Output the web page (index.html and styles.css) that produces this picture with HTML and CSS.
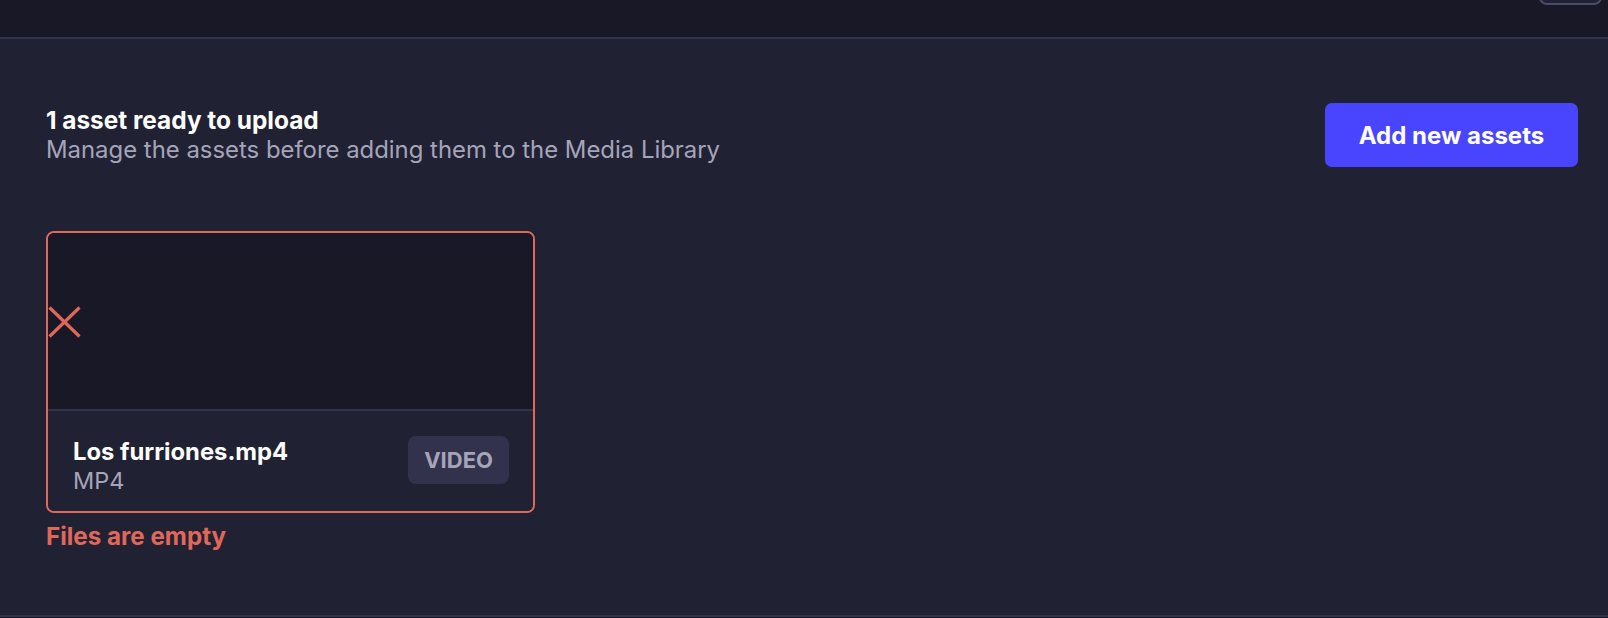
FILE: index.html
```html
<!DOCTYPE html>
<html lang="en">
<head>
<meta charset="utf-8">
<title>Upload assets</title>
<link rel="stylesheet" href="styles.css">
</head>
<body>
<div class="modal">
  <header class="modal-header">
    <button class="close-btn" aria-label="Close"></button>
  </header>
  <main class="modal-body">
    <div class="top-row">
      <div class="intro">
        <h2 class="title">1 asset ready to upload</h2>
        <p class="subtitle">Manage the assets before adding them to the Media Library</p>
      </div>
      <button class="add-btn">Add new assets</button>
    </div>
    <div class="assets">
      <div class="asset">
        <div class="asset-card">
          <div class="preview">
            <svg class="x-icon" width="33" height="32" viewBox="0 0 33 32" aria-hidden="true">
              <line x1="1.5" y1="1.5" x2="31.5" y2="30.5" />
              <line x1="31.5" y1="1.5" x2="1.5" y2="30.5" />
            </svg>
          </div>
          <div class="card-body">
            <div class="meta">
              <div class="name">Los furriones.mp4</div>
              <div class="ext">MP4</div>
            </div>
            <span class="badge">VIDEO</span>
          </div>
        </div>
        <p class="error">Files are empty</p>
      </div>
    </div>
  </main>
  <footer class="modal-footer"></footer>
</div>
</body>
</html>
```

FILE: styles.css
```css
* { box-sizing: border-box; }

html, body {
  margin: 0;
  padding: 0;
  height: 100%;
  background: #212134;
  font-family: Inter, "Noto Sans", "Liberation Sans", sans-serif;
  color: #ffffff;
  overflow: hidden;
}

.modal {
  height: 100vh;
  display: flex;
  flex-direction: column;
}

.modal-header {
  height: 39px;
  flex: none;
  background: #181826;
  border-bottom: 2px solid #32324d;
  display: flex;
  justify-content: flex-end;
  align-items: flex-end;
  padding: 0 6px 32px 0;
}

.close-btn {
  width: 63px;
  height: 40px;
  flex: none;
  border: 2px solid #4a4a6a;
  border-radius: 8px;
  background: #212134;
  padding: 0;
}

.modal-body {
  flex: 1;
  padding: 64px 30px 0 46px;
}

.top-row {
  display: flex;
  justify-content: space-between;
  align-items: center;
  height: 64px;
}

.intro {
  display: flex;
  flex-direction: column;
}

.title {
  margin: 0;
  font-size: 24.4px;
  line-height: 30px;
  font-weight: 700;
  color: #ffffff;
}

.subtitle {
  margin: 0;
  font-size: 23.9px;
  line-height: 30px;
  font-weight: 400;
  color: #a5a5ba;
}

.add-btn {
  width: 253px;
  height: 64px;
  border: none;
  border-radius: 7px;
  background: #4945ff;
  color: #ffffff;
  font-family: inherit;
  font-size: 24px;
  font-weight: 700;
  padding: 0;
}

.assets {
  margin-top: 64px;
  display: flex;
}

.asset {
  width: 489px;
}

.asset-card {
  border: 2px solid #e0685a;
  border-radius: 8px;
  overflow: hidden;
}

.preview {
  height: 178px;
  background: #181826;
  border-bottom: 2px solid #32324d;
  display: flex;
  align-items: center;
}

.x-icon {
  display: block;
  margin-top: 2px;
}

.x-icon line {
  stroke: #e0685a;
  stroke-width: 3.2;
  stroke-linecap: butt;
}

.card-body {
  height: 100px;
  background: #212134;
  display: flex;
  justify-content: space-between;
  align-items: flex-start;
  padding: 0 24px 0 25px;
}

.meta {
  margin-top: 26px;
  display: flex;
  flex-direction: column;
}

.name {
  font-size: 23.8px;
  line-height: 30px;
  font-weight: 700;
  color: #ffffff;
}

.ext {
  font-size: 23.5px;
  line-height: 28px;
  font-weight: 400;
  color: #a5a5ba;
}

.badge {
  margin-top: 25px;
  height: 48px;
  padding: 0 16px;
  display: flex;
  align-items: center;
  border-radius: 8px;
  background: #32324d;
  color: #a5a5ba;
  font-size: 22px;
  font-weight: 700;
}

.error {
  margin: 9px 0 0;
  font-size: 24.2px;
  line-height: 30px;
  font-weight: 700;
  color: #e0685a;
}

.modal-footer {
  flex: none;
  height: 3px;
  background: #181826;
  border-top: 2px solid #32324d;
}
```
